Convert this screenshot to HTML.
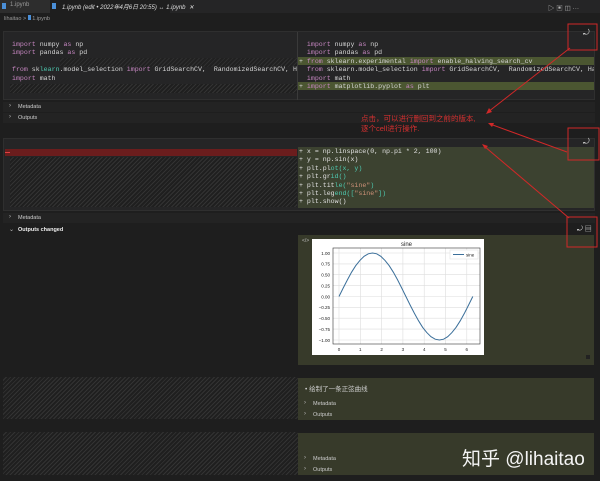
<!DOCTYPE html><html><head><meta charset="utf-8"><style>
*{margin:0;padding:0;box-sizing:border-box}
body{width:600px;height:481px;background:#1e1e1e;position:relative;overflow:hidden;font-family:"Liberation Sans","Noto Sans CJK SC",sans-serif;color:#ccc}
.a{position:absolute}
.clip{position:absolute;overflow:hidden}
.code{font-family:"Liberation Mono",monospace;font-size:6.6px;line-height:8.4px;color:#d4d4d4;white-space:pre}
.k{color:#c586c0}.g{color:#4ec9b0}.s{color:#ce9178}
.hatch{background:repeating-linear-gradient(135deg,#1f1f1f 0 2px,#333 2px 3px)}
.ol{background:#373a2a}
.lbl{font-size:5.5px;color:#ccc}
.chev{font-size:6px;color:#bbb}
</style></head><body>
<!-- tabs -->
<div class="a" style="left:0;top:0;width:600px;height:13px;background:#252526"></div>
<div class="a" style="left:0;top:0;width:50px;height:13px;background:#2d2d2d"></div>
<div class="a" style="left:50px;top:0;width:120px;height:13px;background:#1e1e1e"></div>
<div class="a" style="left:2px;top:3px;width:4px;height:6px;background:#4a8fd8"></div>
<div class="a" style="left:10px;top:2px;font-size:6px;color:#999">1.ipynb</div>
<div class="a" style="left:52px;top:3px;width:4px;height:6px;background:#4a8fd8"></div>
<div class="a" style="left:62px;top:2px;font-size:6px;color:#ddd;font-style:italic;white-space:nowrap">1.ipynb (edit • 2022年4月6日 20:55) ↔ 1.ipynb &nbsp;✕</div>
<div class="a" style="left:548px;top:2px;font-size:6.5px;color:#bbb">▷ ▣ ◫ ···</div>
<div class="a" style="left:4px;top:15px;font-size:5.5px;color:#999">lihaitao &gt; <span style="display:inline-block;width:3px;height:5px;background:#4a8fd8"></span> 1.ipynb</div>

<!-- cell 1 -->
<div class="a" style="left:3px;top:31px;width:592px;height:69px;background:#252526;border:1px solid #2f2f2f"></div>
<div class="a" style="left:297px;top:32px;width:1px;height:68px;background:#3a3a3a"></div>
<div class="a hatch" style="left:10px;top:84px;width:287px;height:9px"></div>
<div class="a hatch" style="left:60px;top:58px;width:237px;height:9px;opacity:.7"></div>
<div class="clip" style="left:5px;top:40px;width:292px;height:50px"><div class="code" style="position:absolute;left:7px;top:1px"><span class="k">import</span> numpy <span class="k">as</span> np
<span class="k">import</span> pandas <span class="k">as</span> pd

<span class="k">from</span> sk<span class="g">learn</span>.model_selection <span class="k">import</span> GridSearchCV,  RandomizedSearchCV, HalvingGridSe
<span class="k">import</span> math</div></div>
<div class="a" style="left:298px;top:57px;width:296px;height:8px;background:#4b5631"></div>
<div class="a" style="left:298px;top:82px;width:296px;height:8px;background:#4b5631"></div>
<div class="clip" style="left:298px;top:40px;width:296px;height:52px"><div class="code" style="position:absolute;left:1px;top:1px">  <span class="k">import</span> numpy <span class="k">as</span> np
  <span class="k">import</span> pandas <span class="k">as</span> pd
+ <span class="k">from</span> sklearn.experimental <span class="k">import</span> enable_halving_search_cv
  <span class="k">from</span> sklearn.model_selection <span class="k">import</span> GridSearchCV,  RandomizedSearchCV, HalvingGridSe
  <span class="k">import</span> math
+ <span class="k">import</span> matplotlib.pyplot <span class="k">as</span> plt</div></div>
<div class="a" style="left:3px;top:102px;width:592px;height:10px;background:#232323"></div>
<div class="a chev" style="left:9px;top:103px">›</div><div class="a lbl" style="left:18px;top:104px">Metadata</div>
<div class="a" style="left:3px;top:113px;width:592px;height:10px;background:#232323"></div>
<div class="a chev" style="left:9px;top:114px">›</div><div class="a lbl" style="left:18px;top:115px">Outputs</div>

<!-- cell 2 -->
<div class="a" style="left:3px;top:138px;width:592px;height:73px;background:#252526;border:1px solid #2f2f2f"></div>
<div class="a" style="left:5px;top:149px;width:292px;height:7px;background:#6b1d1d"></div>
<div class="a" style="left:5px;top:152px;width:5px;height:1px;background:#e04040"></div>
<div class="a hatch" style="left:10px;top:157px;width:287px;height:50px"></div>
<div class="a ol" style="left:298px;top:147px;width:296px;height:61px;background:#3c4230"></div>
<div class="a code" style="left:299px;top:148px;color:#e0e0e0">+ x = np.linspace(0, np.pi * 2, 100)
+ y = np.sin(x)
+ plt.pl<span class="g">ot(x, y)</span>
+ plt.gr<span class="g">id()</span>
+ plt.tit<span class="g">le(</span><span class="s">"sine"</span><span class="g">)</span>
+ plt.leg<span class="g">end([</span><span class="s">"sine"</span><span class="g">])</span>
+ plt.show()</div>
<div class="a" style="left:3px;top:213px;width:592px;height:10px;background:#232323"></div>
<div class="a chev" style="left:9px;top:214px">›</div><div class="a lbl" style="left:18px;top:215px">Metadata</div>
<div class="a chev" style="left:9px;top:226px">⌄</div><div class="a lbl" style="left:18px;top:227px;color:#eee;font-weight:bold">Outputs changed</div>
<div class="a ol" style="left:298px;top:235px;width:296px;height:130px"></div>
<div class="a" style="left:302px;top:238px;font-size:5px;color:#bbb">&lt;/&gt;</div>
<div class="a" style="left:586px;top:355px;width:4px;height:4px;background:#222"></div>
<div class="a" style="left:577px;top:224px;font-size:7px;color:#ddd">⤾ ▤</div>

<!-- chart -->
<svg class="a" style="left:0;top:0" width="600" height="481">
<rect x="312" y="239" width="172" height="116" fill="#fff"/>
<g stroke="#ddd" stroke-width="0.6">
<line x1="339" y1="248" x2="339" y2="344"/><line x1="360.3" y1="248" x2="360.3" y2="344"/><line x1="381.6" y1="248" x2="381.6" y2="344"/><line x1="402.9" y1="248" x2="402.9" y2="344"/><line x1="424.2" y1="248" x2="424.2" y2="344"/><line x1="445.5" y1="248" x2="445.5" y2="344"/><line x1="466.8" y1="248" x2="466.8" y2="344"/>
<line x1="333" y1="253" x2="480" y2="253"/><line x1="333" y1="263.9" x2="480" y2="263.9"/><line x1="333" y1="274.7" x2="480" y2="274.7"/><line x1="333" y1="285.6" x2="480" y2="285.6"/><line x1="333" y1="296.5" x2="480" y2="296.5"/><line x1="333" y1="307.4" x2="480" y2="307.4"/><line x1="333" y1="318.2" x2="480" y2="318.2"/><line x1="333" y1="329.1" x2="480" y2="329.1"/><line x1="333" y1="340" x2="480" y2="340"/>
</g>
<rect x="333" y="248" width="147" height="96" fill="none" stroke="#333" stroke-width="0.6"/>
<polyline fill="none" stroke="#3b6f9a" stroke-width="1" points="339,296.5 343.2,288 347.4,279.9 351.5,272.3 355.7,265.7 359.9,260.4 364.1,256.3 368.3,253.8 372.5,253 376.7,253.8 380.8,256.3 385,260.4 389.2,265.7 393.4,272.3 397.6,279.9 401.7,288 405.9,296.5 410.1,305 414.3,313.1 418.5,320.7 422.6,327.3 426.8,332.6 431,336.7 435.2,339.2 439.4,340 443.6,339.2 447.7,336.7 451.9,332.6 456.1,327.3 460.3,320.7 464.5,313.1 468.6,305 472.8,296.5"/>
<rect x="450" y="250" width="28" height="9" fill="#fff" stroke="#ddd" stroke-width="0.5"/>
<line x1="453" y1="254.5" x2="464" y2="254.5" stroke="#3b6f9a"/>
<g font-family="Liberation Sans" font-size="4.5" fill="#222">
<text x="466" y="256.5">sine</text>
<text x="401" y="246" font-size="6">sine</text>
<g text-anchor="end"><text x="330" y="255">1.00</text><text x="330" y="265.5">0.75</text><text x="330" y="276.5">0.50</text><text x="330" y="287.5">0.25</text><text x="330" y="298.5">0.00</text><text x="330" y="309">−0.25</text><text x="330" y="320">−0.50</text><text x="330" y="331">−0.75</text><text x="330" y="342">−1.00</text></g>
<g text-anchor="middle"><text x="339" y="351">0</text><text x="360.3" y="351">1</text><text x="381.6" y="351">2</text><text x="402.9" y="351">3</text><text x="424.2" y="351">4</text><text x="445.5" y="351">5</text><text x="466.8" y="351">6</text></g>
</g>
<!-- annotations -->
<g stroke="#d02828" stroke-width="1" fill="none">
<rect x="568" y="24" width="29" height="26"/><rect x="568" y="128" width="31" height="32"/><rect x="567" y="217" width="30" height="30"/>
<line x1="570" y1="48" x2="488" y2="112"/><line x1="567" y1="152" x2="490" y2="124"/><line x1="569" y1="218" x2="484" y2="146"/>
</g>
<g fill="#d02828"><path d="M486,114 l6,-2 l-3,-4z"/><path d="M488,123 l6,0 l-2,4z"/><path d="M482,144 l6,2 l-3,3z"/></g>
</svg>
<div class="a" style="left:583px;top:28px;font-size:8px;color:#ddd">⤾</div>
<div class="a" style="left:583px;top:137px;font-size:8px;color:#ddd">⤾</div>
<div class="a" style="left:361px;top:114px;font-size:7.5px;line-height:10px;color:#d43030;white-space:nowrap">点击，可以进行删回到之前的版本,<br>逐个cell进行操作.</div>

<!-- cell 3 -->
<div class="a hatch" style="left:3px;top:377px;width:295px;height:42px"></div>
<div class="a ol" style="left:298px;top:378px;width:296px;height:42px"></div>
<div class="a" style="left:305px;top:383px;font-size:6.5px;color:#ccc">• 绘制了一条正弦曲线</div>
<div class="a chev" style="left:304px;top:400px">›</div><div class="a lbl" style="left:313px;top:401px">Metadata</div>
<div class="a chev" style="left:304px;top:411px">›</div><div class="a lbl" style="left:313px;top:412px">Outputs</div>
<!-- cell 4 -->
<div class="a hatch" style="left:3px;top:432px;width:295px;height:43px"></div>
<div class="a ol" style="left:298px;top:433px;width:296px;height:42px"></div>
<div class="a chev" style="left:304px;top:455px">›</div><div class="a lbl" style="left:313px;top:456px">Metadata</div>
<div class="a chev" style="left:304px;top:466px">›</div><div class="a lbl" style="left:313px;top:467px">Outputs</div>
<div class="a" style="left:462px;top:444px;font-size:19px;color:#f4f4f4;white-space:nowrap">知乎 @lihaitao</div>
</body></html>
